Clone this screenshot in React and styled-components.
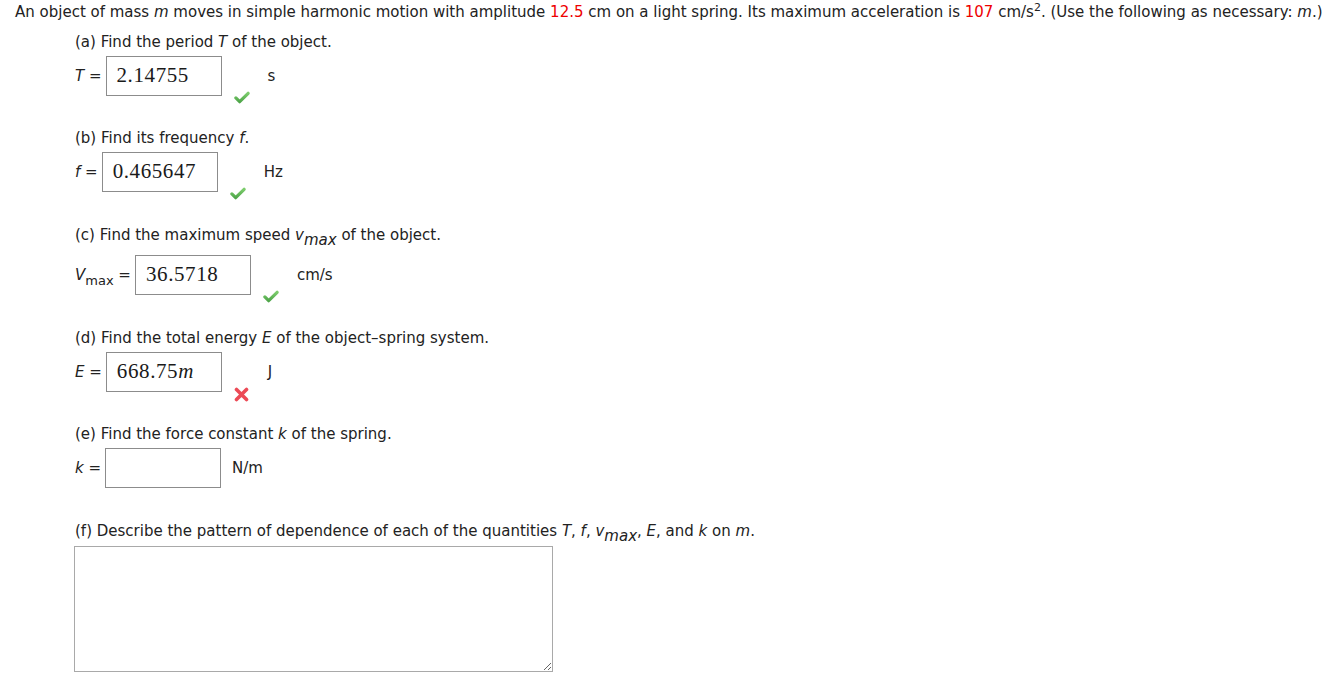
import React from "react";
import styled, { createGlobalStyle } from "styled-components";

const GlobalStyle = createGlobalStyle`
  body {
    margin: 0;
    background: #fff;
    font-family: Verdana, "DejaVu Sans", sans-serif;
    font-size: 15px;
    color: #222;
  }
`;

const Page = styled.main`
  padding: 2px 15px 0 15px;
`;

const Intro = styled.p`
  margin: 0;
  line-height: 20px;
  white-space: nowrap;
`;

const Given = styled.span`
  color: #e00;
`;

const Sup = styled.sup`
  font-size: 11px;
  line-height: 0;
  vertical-align: 6px;
`;

const Parts = styled.div`
  padding-left: 60px;
  margin-top: 10px;
`;

const Part = styled.section`
  margin-bottom: ${(p) => (p.$last ? 0 : p.$tall ? "33px" : "32px")};
`;

const Question = styled.p`
  margin: 0 0 ${(p) => p.$gap || 4}px 0;
  padding-top: ${(p) => (p.$sub ? 1 : 0)}px;
  line-height: 20px;
  white-space: nowrap;
`;

const V = styled.i`
  font-style: italic;
`;

const Sub = styled.sub`
  font-size: ${(p) => p.$size || 15}px;
  line-height: 0;
  vertical-align: -5px;
`;

const Row = styled.div`
  display: flex;
  align-items: flex-start;
  height: 40px;
`;

const Label = styled.span`
  align-self: center;
  margin-right: 4px;
  white-space: nowrap;
`;

const AnswerBox = styled.div`
  box-sizing: border-box;
  width: 116px;
  height: 40px;
  border: 1px solid #8c8c8c;
  padding: 5px 10px 0;
  font-family: "Liberation Serif", "DejaVu Serif", serif;
  font-size: 21px;
  line-height: 26px;
  color: #1a1a1a;
  letter-spacing: 0.6px;
`;

const Mark = styled.span`
  width: 16px;
  height: 14px;
  margin: 35px 18px 0 12px;
  display: flex;
`;

const Unit = styled.span`
  align-self: center;
  margin-left: ${(p) => (p.$bare ? "11px" : "0")};
`;

const Essay = styled.textarea`
  display: block;
  box-sizing: border-box;
  width: 479px;
  height: 126px;
  margin: 2px 0 0 -1px;
  border: 1px solid #a9a9a9;
  font-family: inherit;
  font-size: 14px;
  padding: 2px;
`;

function Check() {
  return (
    <svg width="17" height="13" viewBox="0 0 17 13">
      <defs>
        <linearGradient id="gc" x1="0" y1="0" x2="0" y2="1">
          <stop offset="0" stopColor="#7ccc6c" />
          <stop offset="1" stopColor="#4fa64a" />
        </linearGradient>
      </defs>
      <path
        d="M2 7 L6 11 L15 2"
        fill="none"
        stroke="url(#gc)"
        strokeWidth="3.4"
        strokeLinecap="round"
        strokeLinejoin="round"
      />
    </svg>
  );
}

function Cross() {
  return (
    <svg width="15" height="15" viewBox="0 0 15 15">
      <path
        d="M2.5 2.5 L12.5 12.5 M12.5 2.5 L2.5 12.5"
        fill="none"
        stroke="#ec4a56"
        strokeWidth="3.6"
        strokeLinecap="round"
      />
    </svg>
  );
}

function Answer({ label, value, unit, mark }) {
  return (
    <Row>
      <Label>{label}</Label>
      <AnswerBox>{value}</AnswerBox>
      {mark ? <Mark>{mark === "ok" ? <Check /> : <Cross />}</Mark> : null}
      <Unit $bare={!mark}>{unit}</Unit>
    </Row>
  );
}

export default function App() {
  return (
    <>
      <GlobalStyle />
      <Page>
        <Intro>
          An object of mass <V>m</V> moves in simple harmonic motion with amplitude{" "}
          <Given>12.5</Given> cm on a light spring. Its maximum acceleration is{" "}
          <Given>107</Given> cm/s<Sup>2</Sup>. (Use the following as necessary: <V>m</V>.)
        </Intro>
        <Parts>
          <Part>
            <Question>
              (a) Find the period <V>T</V> of the object.
            </Question>
            <Answer label={<><V>T</V> =</>} value="2.14755" unit="s" mark="ok" />
          </Part>
          <Part>
            <Question>
              (b) Find its frequency <V>f</V>.
            </Question>
            <Answer label={<><V>f</V> =</>} value="0.465647" unit="Hz" mark="ok" />
          </Part>
          <Part $tall>
            <Question $sub $gap={10}>
              (c) Find the maximum speed <V>v<Sub>max</Sub></V> of the object.
            </Question>
            <Answer
              label={<><V>V</V><Sub $size={13}>max</Sub> =</>}
              value="36.5718"
              unit="cm/s"
              mark="ok"
            />
          </Part>
          <Part>
            <Question>
              (d) Find the total energy <V>E</V> of the object–spring system.
            </Question>
            <Answer
              label={<><V>E</V> =</>}
              value={<>668.75<V>m</V></>}
              unit="J"
              mark="bad"
            />
          </Part>
          <Part>
            <Question>
              (e) Find the force constant <V>k</V> of the spring.
            </Question>
            <Answer label={<><V>k</V> =</>} value="" unit="N/m" />
          </Part>
          <Part $last>
            <Question $sub $gap={5}>
              (f) Describe the pattern of dependence of each of the quantities <V>T</V>,{" "}
              <V>f</V>, <V>v<Sub>max</Sub></V>, <V>E</V>, and <V>k</V> on <V>m</V>.
            </Question>
            <Essay />
          </Part>
        </Parts>
      </Page>
    </>
  );
}
